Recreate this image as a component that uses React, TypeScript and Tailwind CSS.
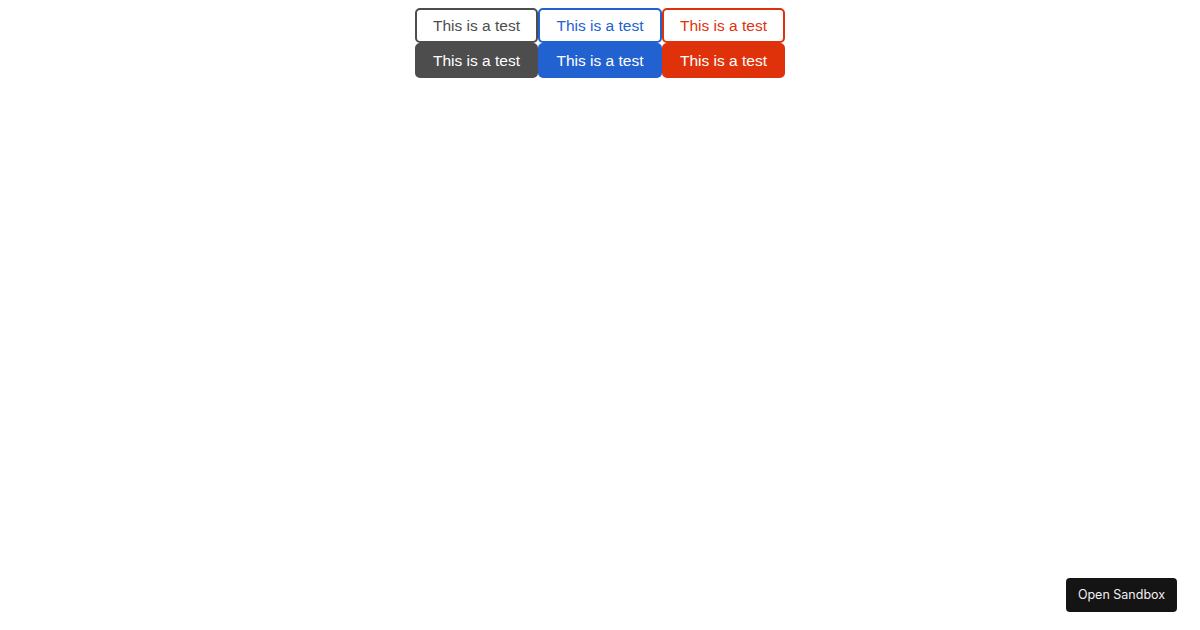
const variants = [
  {
    w: "w-[123px]",
    outline: "border-[#4d4d4d] text-[#4d4d4d] bg-white",
    solid: "border-[#4d4d4d] bg-[#4d4d4d] text-white",
  },
  {
    w: "w-[124px]",
    outline: "border-[#2262d0] text-[#2262d0] bg-white",
    solid: "border-[#2262d0] bg-[#2262d0] text-white",
  },
  {
    w: "w-[123px]",
    outline: "border-[#e0320a] text-[#e0320a] bg-white",
    solid: "border-[#e0320a] bg-[#e0320a] text-white",
  },
];

const base =
  "h-[35px] rounded-[5px] border-2 text-[15.5px] leading-none flex items-center justify-center";

export default function App() {
  return (
    <div className="min-h-[630px] bg-white font-['Liberation_Sans',Arial,sans-serif] relative">
      <div className="flex flex-col items-center pt-2">
        <div className="flex">
          {variants.map((v, i) => (
            <button key={i} className={`${base} ${v.w} ${v.outline}`}>
              This is a test
            </button>
          ))}
        </div>
        <div className="flex">
          {variants.map((v, i) => (
            <button key={i} className={`${base} ${v.w} ${v.solid}`}>
              This is a test
            </button>
          ))}
        </div>
      </div>
      <button className="absolute right-[23px] bottom-[18px] h-[34px] w-[111px] rounded-[4px] bg-[#141414] text-[#f0f0f0] text-[12.5px] font-['Inter',sans-serif]">
        Open Sandbox
      </button>
    </div>
  );
}
